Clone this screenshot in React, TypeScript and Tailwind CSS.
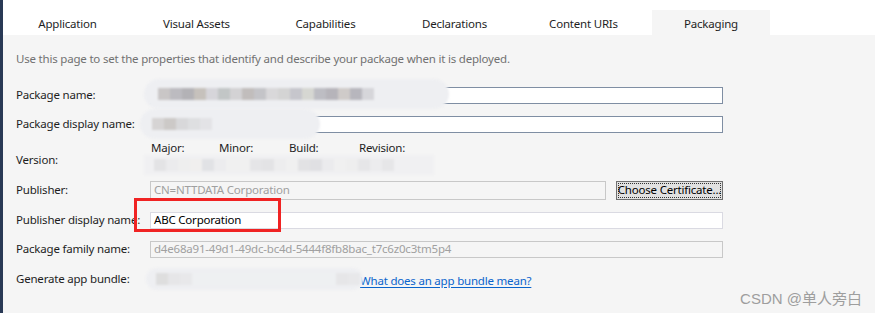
import React from 'react';

const tabs = ['Application', 'Visual Assets', 'Capabilities', 'Declarations', 'Content URIs'];

// soft mosaic smudge used where the screenshot was blurred out
const Smudge: React.FC<{ className?: string; cells?: string[] }> = ({ className = '', cells = [] }) => (
  <div className={`absolute rounded-full bg-[#eeeff2] blur-[1px] flex items-center overflow-hidden ${className}`}>
    {cells.map((c, i) => (
      <div key={i} className="w-[12px] h-[12px] shrink-0" style={{ backgroundColor: c }} />
    ))}
  </div>
);

const Label: React.FC<{ children: React.ReactNode }> = ({ children }) => (
  <div className="w-[134px] shrink-0 whitespace-nowrap text-[#1e1e1e]">{children}</div>
);

const App: React.FC = () => {
  return (
    <div
      className="relative w-[875px] h-[313px] overflow-hidden bg-white flex text-[11.5px] tracking-[-0.2px] leading-none"
      style={{ fontFamily: '"Noto Sans", "Noto Sans CJK SC", sans-serif' }}
    >
      {/* left window edge */}
      <div className="w-[3px] shrink-0 bg-[#293955]" />

      <div className="flex-1 flex flex-col">
        {/* Tab strip */}
        <div className="h-[35px] flex items-end bg-white">
          {tabs.map((t) => (
            <div key={t} className="w-[129px] h-[25px] pt-[3px] flex items-center justify-center text-[#1e1e1e]">
              {t}
            </div>
          ))}
          <div className="ml-[4px] w-[118px] h-[25px] pt-[3px] flex items-center justify-center bg-[#f5f5f5] text-[#1e1e1e]">
            Packaging
          </div>
        </div>

        {/* Page body */}
        <div className="relative flex-1 bg-[#f5f5f5] pl-[13px] flex flex-col">
          <div className="mt-[18px] text-[#717171]">
            Use this page to set the properties that identify and describe your package when it is deployed.
          </div>

          {/* Package name */}
          <div className="relative mt-[22px] flex items-center h-[17px]">
            <Label>Package name:</Label>
            <div className="w-[573px] h-[17px] bg-white border border-[#7f8ea3]" />
            <Smudge
              className="left-[128px] top-[-8px] w-[305px] h-[30px] pl-[14px]"
              cells={['#c9c6c6', '#bcbbc0', '#b3b2b6', '#c6c1bc', '#d6d5da', '#c2c6c6', '#d3d2d4', '#c1bdbc', '#c4c4c8', '#d9d8da', '#d4d4d4', '#c6c6cc', '#d6d7d2', '#bdbdc3', '#b6b4ba', '#cfcbc9', '#b7b6bd', '#d6d6da']}
            />
          </div>

          {/* Package display name */}
          <div className="relative mt-[12px] flex items-center h-[17px]">
            <Label>Package display name:</Label>
            <div className="w-[573px] h-[17px] bg-white border border-[#7f8ea3]" />
            <Smudge
              className="left-[124px] top-[-7px] w-[180px] h-[30px] pl-[12px]"
              cells={['#d6d4d4', '#ccc9c7', '#d8d8da', '#dedfe1', '#e3e3e6']}
            />
          </div>

          {/* Version */}
          <div className="relative mt-[9px] flex h-[35px]">
            <Label>
              <div className="mt-[12px]">Version:</div>
            </Label>
            <div className="flex flex-col">
              <div className="flex text-[#1e1e1e]">
                <div className="w-[69px] pl-[1px]">Major:</div>
                <div className="w-[70px]">Minor:</div>
                <div className="w-[70px]">Build:</div>
                <div className="w-[70px]">Revision:</div>
              </div>
              <div className="relative mt-[4px] h-[17px]">
                <Smudge
                  className="left-[-6px] top-[-2px] w-[290px] h-[20px] pl-[10px] rounded-none bg-[#f0f0f2]"
                  cells={['#e3e3e5', '#ebebed', '#eeeeee', '#f0efee', '#e1e2e5', '#ececee', '#f0f0f0', '#f0f0f0', '#e5e5e7', '#e3e3e5', '#ededee', '#f0f0f0', '#e2e2e4', '#e0e0e3', '#ebebed', '#f0f0f0', '#eeeeee', '#e6e6e8', '#ececee', '#e6e6e8']}
                />
              </div>
            </div>
          </div>

          {/* Publisher */}
          <div className="mt-[4px] flex items-center h-[19px]">
            <Label>Publisher:</Label>
            <div className="w-[456px] h-[19px] border border-[#c8c8c8] bg-[#f5f5f5] flex items-center px-[3px] text-[#a0a0a0]">
              CN=NTTDATA Corporation
            </div>
            <button className="ml-[10px] w-[107px] h-[19px] bg-[#e1e1e1] border border-[#707070] p-[1px]">
              <div className="w-full h-full border border-dotted border-[#333] flex items-center justify-center whitespace-nowrap text-[#000]">
                Choose Certificate...
              </div>
            </button>
          </div>

          {/* Publisher display name */}
          <div className="relative mt-[12px] flex items-center h-[17px]">
            <Label>Publisher display name:</Label>
            <div className="w-[573px] h-[17px] bg-white border border-[#dadae2] flex items-center px-[3px] text-[#000]">
              ABC Corporation
            </div>
            <div className="absolute left-[118px] top-[-14px] w-[147px] h-[34px] border-[3px] border-[#f02323]" />
          </div>

          {/* Package family name */}
          <div className="mt-[12px] flex items-center h-[17px]">
            <Label>Package family name:</Label>
            <div className="w-[573px] h-[17px] bg-[#f5f5f5] border border-[#c8c8c8] flex items-center px-[3px] text-[#a0a0a0]">
              d4e68a91-49d1-49dc-bc4d-5444f8fb8bac_t7c6z0c3tm5p4
            </div>
          </div>

          {/* Generate app bundle */}
          <div className="relative mt-[10px] flex items-center h-[22px]">
            <Label>Generate app bundle:</Label>
            <div className="relative w-[210px] h-[22px]">
              <Smudge
                className="left-[-4px] top-[0px] w-[217px] h-[22px] pl-[10px]"
                cells={['#dedede', '#e6e6e8', '#e8e8ea', '#eef0f2', '#eef0f2', '#eef0f2', '#eef0f2', '#eef0f2', '#eef0f2', '#eef0f2', '#eef0f2', '#eef0f2', '#eef0f2', '#eef0f2', '#eef0f2', '#e6e6e8', '#e8e8ea']}
              />
            </div>
            <a className="text-[#0a64cc] underline underline-offset-[2px] mt-[4px]">What does an app bundle mean?</a>
          </div>

          <div
            className="absolute right-[13px] bottom-[7px] text-[15px] tracking-normal text-[#9e9e9e]"
            style={{ fontFamily: '"Liberation Sans", "Noto Sans CJK SC", sans-serif' }}
          >
            CSDN @单人旁白
          </div>
        </div>
      </div>
    </div>
  );
};

export default App;
